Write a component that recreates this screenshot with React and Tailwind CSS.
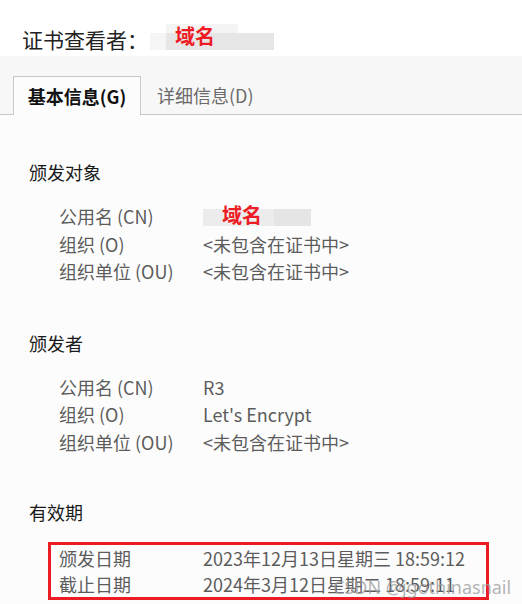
import React from "react";

const issuedTo = [
  { label: "公用名 (CN)", value: null },
  { label: "组织 (O)", value: "<未包含在证书中>" },
  { label: "组织单位 (OU)", value: "<未包含在证书中>" },
];

const issuedBy = [
  { label: "公用名 (CN)", value: "R3" },
  { label: "组织 (O)", value: "Let's Encrypt" },
  { label: "组织单位 (OU)", value: "<未包含在证书中>" },
];

const validity = [
  { label: "颁发日期", value: "2023年12月13日星期三 18:59:12" },
  { label: "截止日期", value: "2024年3月12日星期二 18:59:11" },
];

// blurred domain placeholder used in the CN row
const MaskedDomain = () => (
  <div className="flex items-center h-[27.5px]">
    <div className="relative w-[108px] h-[17px] mt-[2px] bg-[#ececec]">
      <div className="absolute right-0 top-0 h-full w-[37px] bg-[#e5e5e5]" />
      <span className="absolute left-[19px] top-[-7px] text-[20px] leading-[26px] font-bold text-[#ee1c25]">域名</span>
    </div>
  </div>
);

const Row = ({ label, value }) => (
  <div className="flex leading-[27.5px]">
    <div className="w-[144px] shrink-0 text-[#5c5c5c]">{label}</div>
    {value === null ? <MaskedDomain /> : <div className="text-[#5c5c5c]">{value}</div>}
  </div>
);

const App = () => {
  return (
    <div
      className="relative w-[522px] h-[604px] overflow-hidden bg-[#fcfcfc] text-[18px]"
      style={{ fontFamily: '"Noto Sans CJK SC", "Noto Sans", sans-serif' }}
    >
      {/* Title bar */}
      <div className="h-[56px] bg-white flex items-start pl-[22px] pt-[24px]">
        <span className="text-[21px] leading-[30px] text-[#222]">证书查看者：</span>
        <div className="relative flex items-start h-[27px] ml-[2px]">
          <div className="w-[16px] h-[17px] mt-[9px] bg-[#f5f5f5]" />
          <div className="relative w-[72px] h-[26px] bg-[#f4f4f4]">
            <div className="absolute bottom-0 left-0 w-full h-[17px] bg-[#e6e6e6]" />
            <span className="absolute left-[9px] top-[-2px] text-[20px] leading-[28px] font-bold text-[#ee1c25]">域名</span>
          </div>
          <div className="w-[36px] h-[17px] mt-[9px] bg-[#e6e6e6]" />
        </div>
      </div>

      {/* Tabs */}
      <div className="h-[59px] bg-[#f7f7f7] border-b border-[#c8c8c8] flex items-end pl-[13px]">
        <div className="w-[128px] h-[39px] -mb-px bg-[#fcfcfc] border border-b-0 border-[#c8c8c8] flex items-center justify-center">
          <span className="font-bold text-[#111]">基本信息(G)</span>
        </div>
        <div className="h-[38px] flex items-center pl-[16px]">
          <span className="text-[#6a6a6a]">详细信息(D)</span>
        </div>
      </div>

      {/* Content */}
      <div className="pl-[29px] pt-[44px]">
        <div className="leading-[27px] text-[#1a1a1a]">颁发对象</div>
        <div className="pl-[30px] mt-[17px]">
          {issuedTo.map((r) => (
            <Row key={r.label} {...r} />
          ))}
        </div>

        <div className="leading-[27px] text-[#1a1a1a] mt-[44px]">颁发者</div>
        <div className="pl-[30px] mt-[17px]">
          {issuedBy.map((r) => (
            <Row key={r.label} {...r} />
          ))}
        </div>

        <div className="leading-[27px] text-[#1a1a1a] mt-[43px]">有效期</div>
        <div className="ml-[19px] mt-[16px] w-[441px] border-[3px] border-[#ec1c24] pl-[8px]">
          {validity.map((r) => (
            <div key={r.label} className="flex leading-[26px]">
              <div className="w-[144px] shrink-0 text-[#5c5c5c]">{r.label}</div>
              <div className="text-[#5c5c5c]">{r.value}</div>
            </div>
          ))}
        </div>
      </div>

      {/* watermark */}
      <div
        className="absolute left-[333px] top-[575px] whitespace-nowrap text-[18px] leading-[24px] text-[#9a9a9a]/75"
        style={{ fontFamily: '"Noto Sans", sans-serif' }}
      >
        CSDN @jgothinasnail
      </div>
    </div>
  );
};

export default App;
